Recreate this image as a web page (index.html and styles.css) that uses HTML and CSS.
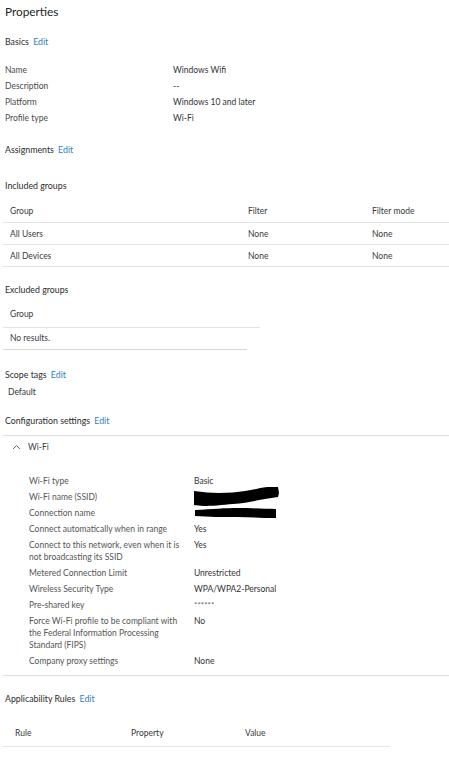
FILE: index.html
```html
<!DOCTYPE html>
<html>
<head>
<meta charset="utf-8">
<link rel="stylesheet" href="styles.css">
</head>
<body>
<div class="page">
  <h1 class="title">Properties</h1>

  <div class="section-head basics-head">Basics <a class="edit">Edit</a></div>
  <div class="kv">
    <span class="k">Name</span><span class="v">Windows Wifi</span>
    <span class="k">Description</span><span class="v">--</span>
    <span class="k">Platform</span><span class="v">Windows 10 and later</span>
    <span class="k">Profile type</span><span class="v">Wi-Fi</span>
  </div>

  <div class="section-head assign-head">Assignments <a class="edit">Edit</a></div>
  <div class="sub-head inc-head">Included groups</div>
  <div class="table inc">
    <div class="tr th"><span>Group</span><span>Filter</span><span>Filter mode</span></div>
    <div class="tr"><span>All Users</span><span>None</span><span>None</span></div>
    <div class="tr"><span>All Devices</span><span>None</span><span>None</span></div>
  </div>

  <div class="sub-head exc-head">Excluded groups</div>
  <div class="table exc">
    <div class="tr th"><span>Group</span></div>
    <div class="tr"><span>No results.</span></div>
  </div>

  <div class="section-head scope-head">Scope tags <a class="edit">Edit</a></div>
  <div class="scope-val">Default</div>

  <div class="section-head config-head">Configuration settings <a class="edit">Edit</a></div>
  <div class="wifi">
    <div class="wifi-head">
      <svg class="chev" width="9" height="6" viewBox="0 0 9 6"><polyline points="1,5 4.5,1.5 8,5" fill="none" stroke="#666" stroke-width="1"/></svg>
      <span>Wi-Fi</span>
    </div>
    <div class="settings">
      <span class="k">Wi-Fi type</span><span class="v">Basic</span>
      <span class="k">Wi-Fi name (SSID)</span><span class="v"></span>
      <span class="k">Connection name</span><span class="v"></span>
      <span class="k">Connect automatically when in range</span><span class="v">Yes</span>
      <span class="k">Connect to this network, even when it is<br>not broadcasting its SSID</span><span class="v">Yes</span>
      <span class="k">Metered Connection Limit</span><span class="v">Unrestricted</span>
      <span class="k">Wireless Security Type</span><span class="v">WPA/WPA2-Personal</span>
      <span class="k">Pre-shared key</span><span class="v stars">******</span>
      <span class="k">Force Wi-Fi profile to be compliant with<br>the Federal Information Processing<br>Standard (FIPS)</span><span class="v">No</span>
      <span class="k">Company proxy settings</span><span class="v">None</span>
      <svg class="redact" width="90" height="32" viewBox="0 0 90 32">
        <path d="M1,4 C10,5 18,6 26,6 C36,6 44,5 52,4 C60,3 66,1 74,0 L85,0 L86,6 L85,10 C78,11 72,12 66,13 C58,15 50,16 40,17 C30,18 18,19 10,19 L1,18 Z" fill="#000"/>
        <path d="M2,23 C20,22 32,21 45,21 C60,21 72,22 83,22 L83,31 C68,31 56,30 44,30 C30,30 16,30 2,29 Z" fill="#000"/>
      </svg>
    </div>
  </div>

  <div class="section-head appl-head">Applicability Rules <a class="edit">Edit</a></div>
  <div class="table appl">
    <div class="tr th"><span>Rule</span><span>Property</span><span>Value</span></div>
  </div>
</div>
</body>
</html>
```

FILE: styles.css
```css
* { box-sizing: border-box; }
html, body { margin: 0; padding: 0; background: #fff; }
body {
  font-family: Lato, "Noto Sans", sans-serif;
  font-size: 8.5px;
  color: #444;
  width: 449px;
  height: 757px;
  overflow: hidden;
}
.page { padding: 0 0 0 5px; }

.title {
  margin: 0;
  padding-top: 2px;
  font-size: 11.8px;
  font-weight: normal;
  line-height: 20px;
  color: #252423;
}

.section-head, .sub-head {
  line-height: 16px;
  color: #2b2b2b;
  font-size: 8.8px;
}
.edit { color: #2d7fc1; margin-left: 2px; }

.basics-head { margin-top: 12px; }
.kv {
  margin-top: 12px;
  display: grid;
  grid-template-columns: 168px 1fr;
  line-height: 16px;
}
.kv .k { color: #4a4a4a; }
.kv .v { color: #333; }

.assign-head { margin-top: 16px; }
.inc-head { margin-top: 20px; }

.table { margin-left: -2px; }
.tr { display: grid; border-bottom: 1px solid #e3e3e3; line-height: 16px; color: #3a3a3a; }
.tr span { padding-left: 7px; }

.inc { margin-top: 5px; }
.inc .tr { grid-template-columns: 238px 124px 1fr; padding: 3px 0 2px; }
.inc .th { padding: 4px 0 3px; }

.exc-head { margin-top: 15px; }
.exc .th { width: 257px; padding: 8px 0 5px; }
.exc .tr:not(.th) { width: 244px; padding: 2px 0 3px; border-bottom-color: #d6d6d6; }

.scope-head { margin-top: 17px; }
.scope-val { margin-top: 1px; line-height: 16px; padding-left: 3px; color: #333; }

.config-head { margin-top: 13px; }

.wifi {
  margin-top: 6px;
  margin-left: -2px;
  border-top: 1px solid #dcdcdc;
  border-bottom: 1px solid #dcdcdc;
  padding-bottom: 8px;
}
.wifi-head {
  padding-top: 3px;
  padding-left: 9px;
  line-height: 16px;
  display: flex;
  align-items: center;
  gap: 7px;
  color: #3a3a3a;
}
.chev { display: block; }

.settings {
  position: relative;
  margin-top: 20px;
  margin-left: 26px;
  display: grid;
  grid-template-columns: 165px 1fr;
  row-gap: 4px;
  line-height: 12px;
}
.settings .k { color: #555; }
.settings .v { color: #333; }
.settings .stars { font-size: 8px; color: #666; }
.redact { position: absolute; left: 164px; top: 12px; }

.appl-head { margin-top: 15px; }
.appl { margin-top: 8px; }
.appl .th {
  width: 387px;
  grid-template-columns: 116px 114px 1fr;
  padding: 10px 0 5px;
  border-bottom-color: #e6e6e6;
}
.appl .tr span { padding-left: 12px; }
```
